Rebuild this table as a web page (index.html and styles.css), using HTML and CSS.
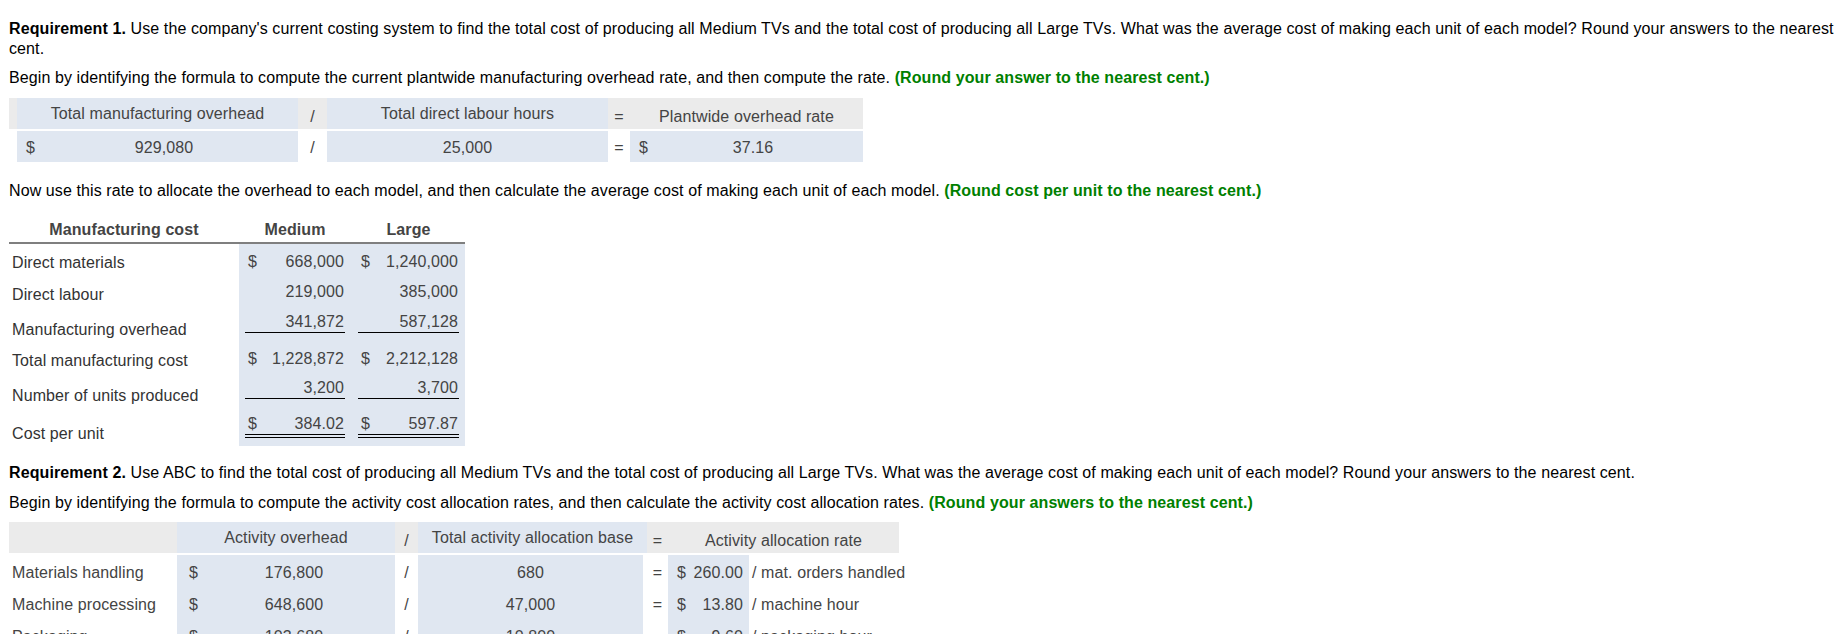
FILE: index.html
```html
<!DOCTYPE html>
<html lang="en">
<head>
  <meta charset="UTF-8" />
  <meta name="viewport" content="width=device-width, initial-scale=1.0" />
  <title>Costing Requirements</title>
  <link rel="stylesheet" href="styles.css">
</head>
<body>
  <div class="page">
    <!-- Requirement 1 -->
    <p class="intro"><b>Requirement 1.</b> Use the company's current costing system to find the total cost of producing all Medium TVs and the total cost of producing all Large TVs. What was the average cost of making each unit of each model? Round your answers to the nearest cent.</p>
    <p class="step">Begin by identifying the formula to compute the current plantwide manufacturing overhead rate, and then compute the rate. <b class="hint">(Round your answer to the nearest cent.)</b></p>

    <!-- Plantwide rate formula -->
    <div class="formula rate-formula">
      <div class="f-row f-head">
        <div class="f-cell"></div>
        <div class="f-cell input">Total manufacturing overhead</div>
        <div class="f-cell op">/</div>
        <div class="f-cell input">Total direct labour hours</div>
        <div class="f-cell op">=</div>
        <div class="f-cell result">Plantwide overhead rate</div>
      </div>
      <div class="f-row">
        <div class="f-cell"></div>
        <div class="f-cell input money"><span class="cur">$</span><span class="num">929,080</span></div>
        <div class="f-cell op">/</div>
        <div class="f-cell input">25,000</div>
        <div class="f-cell op">=</div>
        <div class="f-cell input money"><span class="cur">$</span><span class="num">37.16</span></div>
      </div>
    </div>

    <p class="step lead">Now use this rate to allocate the overhead to each model, and then calculate the average cost of making each unit of each model. <b class="hint">(Round cost per unit to the nearest cent.)</b></p>

    <!-- Cost per unit table -->
    <div class="cost-table">
      <div class="cost-head">
        <div class="cost-label">Manufacturing cost</div>
        <div class="pair">
          <div>Medium</div>
          <div>Large</div>
        </div>
      </div>
      <div class="cost-row first">
        <div class="cost-label">Direct materials</div>
        <div class="pair shaded">
          <div class="amt"><span>$</span>668,000</div>
          <div class="amt"><span>$</span>1,240,000</div>
        </div>
      </div>
      <div class="cost-row plain">
        <div class="cost-label">Direct labour</div>
        <div class="pair shaded">
          <div class="amt">219,000</div>
          <div class="amt">385,000</div>
        </div>
      </div>
      <div class="cost-row sub">
        <div class="cost-label">Manufacturing overhead</div>
        <div class="pair shaded">
          <div class="amt">341,872</div>
          <div class="amt">587,128</div>
        </div>
      </div>
      <div class="cost-row total">
        <div class="cost-label">Total manufacturing cost</div>
        <div class="pair shaded">
          <div class="amt"><span>$</span>1,228,872</div>
          <div class="amt"><span>$</span>2,212,128</div>
        </div>
      </div>
      <div class="cost-row sub">
        <div class="cost-label">Number of units produced</div>
        <div class="pair shaded">
          <div class="amt">3,200</div>
          <div class="amt">3,700</div>
        </div>
      </div>
      <div class="cost-row final">
        <div class="cost-label">Cost per unit</div>
        <div class="pair shaded">
          <div class="amt"><span>$</span>384.02</div>
          <div class="amt"><span>$</span>597.87</div>
        </div>
      </div>
    </div>

    <!-- Requirement 2 -->
    <p class="step"><b>Requirement 2.</b> Use ABC to find the total cost of producing all Medium TVs and the total cost of producing all Large TVs. What was the average cost of making each unit of each model? Round your answers to the nearest cent.</p>
    <p class="intro">Begin by identifying the formula to compute the activity cost allocation rates, and then calculate the activity cost allocation rates. <b class="hint">(Round your answers to the nearest cent.)</b></p>

    <div class="formula abc-formula">
      <div class="f-row f-head">
        <div class="f-cell"></div>
        <div class="f-cell input">Activity overhead</div>
        <div class="f-cell op">/</div>
        <div class="f-cell input">Total activity allocation base</div>
        <div class="f-cell op">=</div>
        <div class="f-cell result wide">Activity allocation rate</div>
      </div>
      <div class="f-row">
        <div class="f-cell label">Materials handling</div>
        <div class="f-cell input money"><span class="cur">$</span><span class="num">176,800</span></div>
        <div class="f-cell op">/</div>
        <div class="f-cell input base">680</div>
        <div class="f-cell op">=</div>
        <div class="f-cell input rate"><span>$</span><span>260.00</span></div>
        <div class="f-cell unit">/ mat. orders handled</div>
      </div>
      <div class="f-row">
        <div class="f-cell label">Machine processing</div>
        <div class="f-cell input money"><span class="cur">$</span><span class="num">648,600</span></div>
        <div class="f-cell op">/</div>
        <div class="f-cell input base">47,000</div>
        <div class="f-cell op">=</div>
        <div class="f-cell input rate"><span>$</span><span>13.80</span></div>
        <div class="f-cell unit">/ machine hour</div>
      </div>
      <div class="f-row">
        <div class="f-cell label">Packaging</div>
        <div class="f-cell input money"><span class="cur">$</span><span class="num">103,680</span></div>
        <div class="f-cell op">/</div>
        <div class="f-cell input base">10,800</div>
        <div class="f-cell op">=</div>
        <div class="f-cell input rate"><span>$</span><span>9.60</span></div>
        <div class="f-cell unit">/ packaging hour</div>
      </div>
    </div>
  </div>
</body>
</html>
```

FILE: styles.css
```css
/* Base styling */
body {
  margin: 0;
  font-family: "Liberation Sans", Arial, sans-serif;
  font-size: 16px;
  line-height: 20px;
  letter-spacing: 0.1px;
  color: #000;
  background: #fff;
}
.page {
  padding: 19px 0 0 9px;
}
p {
  margin: 0;
}
.intro {
  margin-bottom: 9px;
}
.step {
  margin-bottom: 10px;
}
.lead {
  margin-bottom: 19px;
}
.hint {
  color: #008000;
}

/* Formula rows (rate tables) */
.formula {
  color: #444;
}
.f-row {
  display: grid;
  height: 31px;
}
.f-head {
  background-color: #ebebeb;
}
.f-cell {
  padding-top: 7px;
  text-align: center;
  white-space: nowrap;
}
.f-head .f-cell {
  padding-top: 6px;
}
.f-head .op,
.f-head .result {
  padding-top: 9px;
}
.input {
  background-color: #e0e7f1;
}
.money {
  display: flex;
}
.money .cur {
  padding-left: 9px;
}
.money .num {
  flex: 1;
  padding-right: 5px;
}

.rate-formula {
  width: 854px;
  margin-bottom: 19px;
}
.rate-formula .f-row {
  grid-template-columns: 8px 281px 29px 281px 22px 233px;
}
.rate-formula .f-row + .f-row {
  margin-top: 2px;
}

.abc-formula {
  width: 890px;
}
.abc-formula .f-row {
  grid-template-columns: 168px 218px 23px 229px 21px 81px 150px;
  height: 32px;
}
.abc-formula .f-head {
  height: 31px;
  margin-bottom: 2px;
}
.abc-formula .f-row:not(.f-head) .f-cell {
  padding-top: 8px;
}
.abc-formula .wide {
  grid-column: span 2;
}
.abc-formula .label {
  text-align: left;
  padding-left: 3px;
}
.abc-formula .money .cur {
  padding-left: 12px;
}
.abc-formula .base {
  margin-right: 4px;
}
.abc-formula .rate {
  display: flex;
  justify-content: space-between;
  padding-left: 9px;
  padding-right: 6px;
}
.abc-formula .unit {
  text-align: left;
  padding-left: 3px;
}

/* Cost per unit table */
.cost-table {
  width: 456px;
  margin-bottom: 17px;
  color: #333;
}
.cost-head,
.cost-row {
  display: grid;
  grid-template-columns: 230px 226px;
}
.cost-head {
  font-weight: bold;
  color: #444;
  text-align: center;
  padding-bottom: 2px;
  border-bottom: 2px solid #7f7f7f;
}
.pair {
  display: grid;
  grid-template-columns: 100px 101px;
  column-gap: 13px;
  padding: 0 6px;
}
.shaded {
  background-color: #e0e7f1;
  align-items: end;
}
.cost-row .cost-label {
  align-self: end;
  padding-left: 3px;
}
.amt {
  display: flex;
  justify-content: flex-end;
  padding: 0 1px 0 3px;
  color: #444;
}
.amt span {
  margin-right: auto;
}
.cost-row.first { height: 29px; }
.cost-row.first .amt { margin-bottom: 1px; }
.cost-row.plain { height: 32px; }
.cost-row.plain .amt { margin-bottom: 3px; }
.cost-row.sub { height: 35px; }
.cost-row.sub .amt {
  margin-bottom: 7px;
  border-bottom: 1px solid #000;
}
.cost-row.total { height: 31px; }
.cost-row.total .amt { margin-bottom: 2px; }
.cost-row.final { height: 40px; }
.cost-row.final .cost-label { padding-bottom: 2px; }
.cost-row.final .amt {
  margin-bottom: 8px;
  border-bottom: 4px double #000;
}
```
